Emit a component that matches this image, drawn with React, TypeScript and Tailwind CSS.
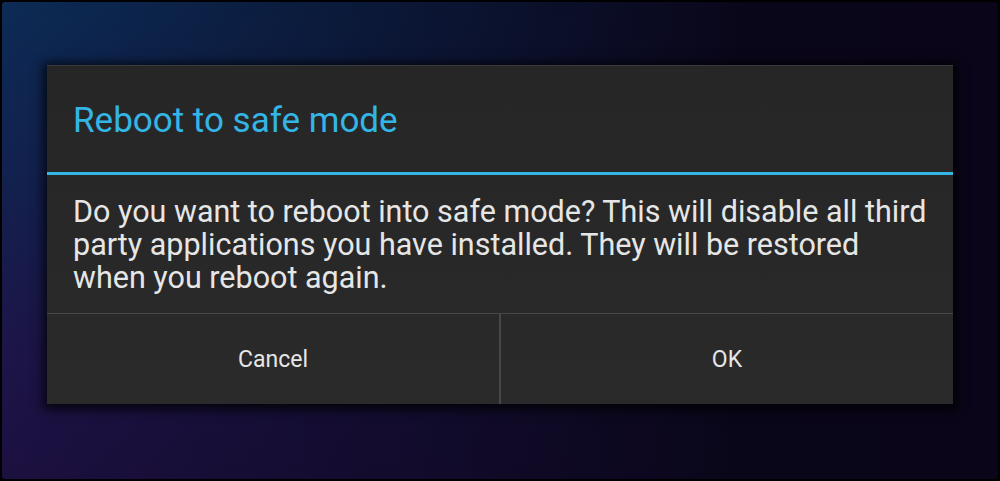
export default function App() {
  return (
    <div className="h-[481px] w-full bg-black p-[2px]" style={{ fontFamily: "Roboto, 'Noto Sans', sans-serif" }}>
      <div className="h-full w-full rounded-[3px] bg-[linear-gradient(90deg,rgba(8,5,22,0)_0%,rgba(10,7,28,0.55)_40%,#0a0619_75%,#0a0518_100%),linear-gradient(180deg,#0c2b55_0%,#13204e_40%,#1d1448_75%,#1c1040_100%)] pl-[45px] pt-[63px]">
        <div className="relative w-[906px] overflow-hidden bg-[linear-gradient(180deg,#262626_0%,#2a2a2a_100%)] shadow-[0_2px_10px_4px_rgba(0,0,0,0.75)]">
          <div className="h-px bg-[#3a3a3a]" />
          <div className="h-[106px] pl-[26px] pt-[35px]">
            <h1 className="text-[35px] leading-[40px] text-[#33b5e5]">Reboot to safe mode</h1>
          </div>
          <div className="h-[3px] bg-[#33b5e5]" />
          <div className="h-[138px] pl-[26px] pt-[20px]">
            <p className="text-[30.5px] leading-[33px] text-[#e6e6e6]">
              Do you want to reboot into safe mode? This will disable all third
              <br />
              party applications you have installed. They will be restored
              <br />
              when you reboot again.
            </p>
          </div>
          <div className="h-px bg-[#474747]" />
          <div className="flex h-[90px]">
            <button className="flex flex-1 items-center justify-center pt-[3px] text-[23px] text-[#e6e6e6]">Cancel</button>
            <div className="w-[2px] bg-[#474747]" />
            <button className="flex flex-1 items-center justify-center pt-[3px] text-[23px] text-[#e6e6e6]">OK</button>
          </div>
        </div>
      </div>
    </div>
  );
}
